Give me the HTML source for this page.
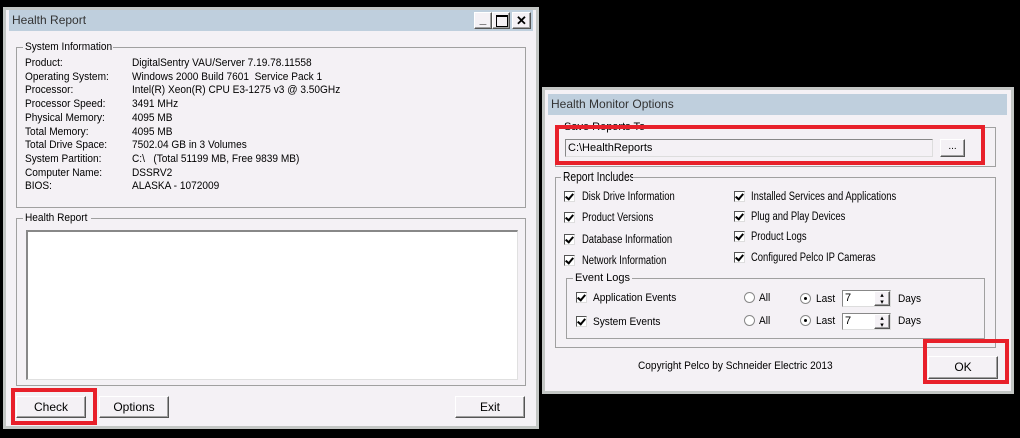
<!DOCTYPE html><html><head><style>
body{margin:0;width:1020px;height:438px;background:#000;position:relative;overflow:hidden;font-family:"Liberation Sans",Arial,sans-serif;font-size:11px;color:#000}
.a{position:absolute}
.win{background:#f4f1f5;border:3px solid #c3c6c4;box-sizing:border-box}
.tb{background:#bfcfdd;color:#333;font-size:12px;line-height:21px;padding-left:3px;box-sizing:border-box}
.grp{border:1px solid #a0a0a0;box-sizing:border-box}
.lbl{background:#f4f1f5;padding:0 2px;line-height:12px;white-space:nowrap;overflow:hidden}
.t{white-space:nowrap;line-height:13px;transform:scaleX(.92);transform-origin:0 0}
.c{white-space:nowrap;line-height:13px;font-size:11.5px;transform:scaleX(.82);transform-origin:0 0}
.btn{background:#f4f1f5;border:1px solid #fff;border-right-color:#555;border-bottom-color:#555;box-shadow:inset -1px -1px 0 #a0a0a0;box-sizing:border-box;text-align:center;font-size:12px}
.cb{width:11px;height:11px;border:1px solid #555;background:#fff;box-sizing:border-box;border-right-color:#ddd;border-bottom-color:#ddd}
.cb:after{content:"";position:absolute;left:2px;top:0px;width:3px;height:6px;border:solid #000;border-width:0 2px 2px 0;transform:rotate(40deg)}
.rd{width:11px;height:11px;border-radius:50%;border:1px solid #888;background:#fff;box-sizing:border-box}
.red{border:4px solid #e8202a;box-sizing:border-box}
.tx{background:#f4f1f5;border:1px solid #888;border-right-color:#ddd;border-bottom-color:#ddd;box-sizing:border-box}
</style></head><body>
<!-- left window -->
<div class="a win" style="left:3px;top:7px;width:536px;height:422px"></div>
<div class="a tb" style="left:9px;top:10px;width:524px;height:21px">Health Report</div>
<div class="a btn" style="left:474px;top:12px;width:18px;height:17px;font-weight:bold;line-height:13px">_</div>
<div class="a btn" style="left:492px;top:12px;width:18px;height:17px"><div class="a" style="left:3px;top:2px;width:10px;height:9px;border:1px solid #000;border-top-width:2px"></div></div>
<div class="a btn" style="left:512px;top:12px;width:19px;height:17px;font-weight:bold;font-size:13px;line-height:15px">✕</div>
<div class="a grp" style="left:16px;top:47px;width:510px;height:161px"></div>
<div class="a lbl" style="left:23px;top:41px;width:86px"><span class="t" style="display:inline-block">System Information</span></div>
<div class="a t" style="left:25px;top:57px;line-height:13.7px">Product:<br>Operating System:<br>Processor:<br>Processor Speed:<br>Physical Memory:<br>Total Memory:<br>Total Drive Space:<br>System Partition:<br>Computer Name:<br>BIOS:</div>
<div class="a t" style="left:132px;top:57px;line-height:13.7px">DigitalSentry VAU/Server 7.19.78.11558<br>Windows 2000 Build 7601&nbsp; Service Pack 1<br>Intel(R) Xeon(R) CPU E3-1275 v3 @ 3.50GHz<br>3491 MHz<br>4095 MB<br>4095 MB<br>7502.04 GB in 3 Volumes<br>C:\&nbsp;&nbsp; (Total 51199 MB, Free 9839 MB)<br>DSSRV2<br>ALASKA - 1072009</div>
<div class="a grp" style="left:16px;top:218px;width:510px;height:168px"></div>
<div class="a lbl" style="left:23px;top:212px;width:64px"><span class="t" style="display:inline-block">Health Report</span></div>
<div class="a" style="left:26px;top:230px;width:492px;height:150px;background:#fff;border:1px solid #888;border-right-color:#e0e0e0;border-bottom-color:#e0e0e0;box-sizing:border-box;border-width:2px 1px 1px 2px"></div>
<div class="a btn" style="left:16px;top:396px;width:70px;height:22px;line-height:20px">Check</div>
<div class="a btn" style="left:99px;top:396px;width:70px;height:22px;line-height:20px">Options</div>
<div class="a btn" style="left:455px;top:396px;width:70px;height:22px;line-height:20px">Exit</div>
<div class="a red" style="left:11px;top:388px;width:86px;height:37px"></div>

<!-- right window -->
<div class="a win" style="left:542px;top:87px;width:472px;height:307px"></div>
<div class="a tb" style="left:548px;top:94px;width:459px;height:21px">Health Monitor Options</div>
<div class="a grp" style="left:555px;top:127px;width:441px;height:40px"></div>
<div class="a lbl" style="left:562px;top:121px">Save Reports To</div>
<div class="a tx" style="left:565px;top:139px;width:368px;height:18px;padding-left:2px;line-height:16px">C:\HealthReports</div>
<div class="a btn" style="left:940px;top:139px;width:25px;height:18px;line-height:14px;font-size:10px">...</div>
<div class="a red" style="left:555px;top:125px;width:430px;height:40px"></div>
<div class="a grp" style="left:555px;top:177px;width:441px;height:171px"></div>
<div class="a lbl" style="left:561px;top:171px;width:68px"><span class="c" style="display:inline-block;font-size:12.5px">Report Includes</span></div>
<div class="a cb" style="left:564px;top:191px"></div><div class="a c" style="left:582px;top:191px">Disk Drive Information</div>
<div class="a cb" style="left:564px;top:212px"></div><div class="a c" style="left:582px;top:212px">Product Versions</div>
<div class="a cb" style="left:564px;top:234px"></div><div class="a c" style="left:582px;top:234px">Database Information</div>
<div class="a cb" style="left:564px;top:255px"></div><div class="a c" style="left:582px;top:255px">Network Information</div>
<div class="a cb" style="left:734px;top:191px"></div><div class="a c" style="left:751px;top:191px">Installed Services and Applications</div>
<div class="a cb" style="left:734px;top:211px"></div><div class="a c" style="left:751px;top:211px">Plug and Play Devices</div>
<div class="a cb" style="left:734px;top:231px"></div><div class="a c" style="left:751px;top:231px">Product Logs</div>
<div class="a cb" style="left:734px;top:252px"></div><div class="a c" style="left:751px;top:252px">Configured Pelco IP Cameras</div>
<div class="a grp" style="left:566px;top:278px;width:419px;height:61px"></div>
<div class="a lbl" style="left:573px;top:272px">Event Logs</div>
<div class="a cb" style="left:576px;top:292px"></div><div class="a t" style="left:593px;top:292px">Application Events</div>
<div class="a cb" style="left:576px;top:316px"></div><div class="a t" style="left:593px;top:316px">System Events</div>
<div class="a rd" style="left:744px;top:292px"></div><div class="a t" style="left:759px;top:292px">All</div>
<div class="a rd" style="left:744px;top:315px"></div><div class="a t" style="left:759px;top:315px">All</div>
<div class="a rd" style="left:800px;top:293px"></div><div class="a" style="left:804px;top:297px;width:3px;height:3px;background:#000;border-radius:50%"></div><div class="a t" style="left:816px;top:293px">Last</div>
<div class="a rd" style="left:800px;top:315px"></div><div class="a" style="left:804px;top:319px;width:3px;height:3px;background:#000;border-radius:50%"></div><div class="a t" style="left:816px;top:315px">Last</div>
<div class="a tx" style="left:842px;top:290px;width:49px;height:17px;background:#fff;padding-left:2px;line-height:15px">7</div>
<div class="a btn" style="left:874px;top:291px;width:16px;height:15px;font-size:7px;line-height:7px">▴<br>▾</div>
<div class="a tx" style="left:842px;top:313px;width:49px;height:17px;background:#fff;padding-left:2px;line-height:15px">7</div>
<div class="a btn" style="left:874px;top:314px;width:16px;height:15px;font-size:7px;line-height:7px">▴<br>▾</div>
<div class="a t" style="left:898px;top:293px">Days</div>
<div class="a t" style="left:898px;top:315px">Days</div>
<div class="a t" style="left:638px;top:360px">Copyright Pelco by Schneider Electric 2013</div>
<div class="a btn" style="left:928px;top:356px;width:70px;height:23px;line-height:21px">OK</div>
<div class="a red" style="left:923px;top:339px;width:86px;height:45px"></div>
</body></html>
